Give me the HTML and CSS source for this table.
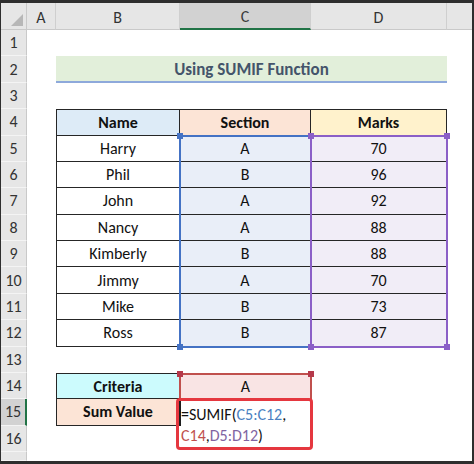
FILE: index.html
```html
<!DOCTYPE html>
<html>
<head>
<meta charset="utf-8">
<link rel="stylesheet" href="styles.css">
</head>
<body>
<div class="sheet">
  <div class="corner"><span class="tri"></span></div>
  <div class="colh">A</div>
  <div class="colh">B</div>
  <div class="colh sel">C</div>
  <div class="colh">D</div>
  <div class="colh last"></div>

  <div class="rowh r1">1</div>
  <div class="rowh r2">2</div>
  <div class="rowh r3">3</div>
  <div class="rowh r4">4</div>
  <div class="rowh r5">5</div>
  <div class="rowh r6">6</div>
  <div class="rowh r7">7</div>
  <div class="rowh r8">8</div>
  <div class="rowh r9">9</div>
  <div class="rowh r10">10</div>
  <div class="rowh r11">11</div>
  <div class="rowh r12">12</div>
  <div class="rowh r13">13</div>
  <div class="rowh r14">14</div>
  <div class="rowh r15 sel">15</div>
  <div class="rowh r16">16</div>
  <div class="rowh r17"></div>

  <div class="title">Using SUMIF Function</div>

  <div class="cell th cb first top r4">Name</div>
  <div class="cell th cc top r4 sec-h">Section</div>
  <div class="cell th cd top r4 marks-h">Marks</div>

  <div class="cell cb first r5">Harry</div><div class="cell cc secv r5">A</div><div class="cell cd markv r5">70</div>
  <div class="cell cb first r6">Phil</div><div class="cell cc secv r6">B</div><div class="cell cd markv r6">96</div>
  <div class="cell cb first r7">John</div><div class="cell cc secv r7">A</div><div class="cell cd markv r7">92</div>
  <div class="cell cb first r8">Nancy</div><div class="cell cc secv r8">A</div><div class="cell cd markv r8">88</div>
  <div class="cell cb first r9">Kimberly</div><div class="cell cc secv r9">B</div><div class="cell cd markv r9">88</div>
  <div class="cell cb first r10">Jimmy</div><div class="cell cc secv r10">A</div><div class="cell cd markv r10">70</div>
  <div class="cell cb first r11">Mike</div><div class="cell cc secv r11">B</div><div class="cell cd markv r11">73</div>
  <div class="cell cb first r12">Ross</div><div class="cell cc secv r12">B</div><div class="cell cd markv r12">87</div>

  <div class="range range-c"><i class="h tl"></i><i class="h bl"></i></div>
  <div class="range range-d"><i class="h tl"></i><i class="h tr"></i><i class="h bl"></i><i class="h br"></i></div>

  <div class="cell th cb first top r14 crit">Criteria</div>
  <div class="cell cc r14 crit-v">A</div>
  <div class="cell th cb first r15 sumv">Sum Value</div>
  <div class="range range-crit"><i class="h tl"></i><i class="h tr"></i></div>

  <div class="formula"><span class="fk">=SUMIF(</span><span class="fb">C5:C12</span><span class="fk">,</span> <span class="fr">C14</span><span class="fk">,</span><span class="fp">D5:D12</span><span class="fk">)</span></div>
</div>
</body>
</html>
```
FILE: styles.css
```css
* { box-sizing: border-box; }
html, body { margin: 0; padding: 0; }
body {
  background: #2e2e2e;
  width: 474px;
  height: 464px;
  overflow: hidden;
  font-family: Carlito, Lato, "Liberation Sans", sans-serif;
  color: #111;
}
.sheet {
  margin: 3px 2px 3px 1px;
  width: 471px;
  height: 458px;
  background: #fff;
  display: grid;
  grid-template-columns: 26px 29px 124px 131px 136px 1fr;
  grid-template-rows: 27px repeat(16, 26.375px) 1fr;
  font-size: 16px;
}
.corner {
  grid-row: 1; grid-column: 1;
  background: #e6e6e6;
  border-right: 1px solid #c9c9c9;
  border-bottom: 1px solid #c9c9c9;
  position: relative;
}
.tri {
  position: absolute;
  right: 3px; bottom: 3px;
  width: 0; height: 0;
  border-left: 12px solid transparent;
  border-bottom: 12px solid #b7b7b7;
}
.colh {
  grid-row: 1;
  background: #e6e6e6;
  border-right: 1px solid #cfcfcf;
  border-bottom: 1px solid #c9c9c9;
  display: flex; align-items: center; justify-content: center;
  color: #333;
  font-size: 16px;
  padding-top: 2px;
}
.colh.sel {
  background: #d2d2d2;
  border-bottom: 2px solid #217346;
  color: #3a3a3a;
}
.colh.last { border-right: none; }
.rowh {
  grid-column: 1;
  background: #e6e6e6;
  border-right: 1px solid #c9c9c9;
  border-bottom: 1px solid #f4f4f4;
  display: flex; align-items: center; justify-content: center;
  color: #333;
  font-size: 16px;
}
.rowh.sel {
  background: #d2d2d2;
  border-right: 2px solid #217346;
}
.r1 { grid-row: 2; } .r2 { grid-row: 3; } .r3 { grid-row: 4; } .r4 { grid-row: 5; }
.r5 { grid-row: 6; } .r6 { grid-row: 7; } .r7 { grid-row: 8; } .r8 { grid-row: 9; }
.r9 { grid-row: 10; } .r10 { grid-row: 11; } .r11 { grid-row: 12; } .r12 { grid-row: 13; }
.r13 { grid-row: 14; } .r14 { grid-row: 15; } .r15 { grid-row: 16; } .r16 { grid-row: 17; }
.r17 { grid-row: 18; }

.title {
  grid-row: 3; grid-column: 3 / 6;
  background: #e2efda;
  border-bottom: 2px solid #8ea9db;
  display: flex; align-items: center; justify-content: center;
  font-weight: bold;
  color: #44546a;
  font-size: 17px;
  padding-top: 1px;
}

.cell {
  display: flex; align-items: center; justify-content: center;
  border-right: 1px solid #262626;
  border-bottom: 1px solid #262626;
  font-size: 16px;
  background: #fff;
}
.cell.first { border-left: 1px solid #262626; }
.cell.top { border-top: 1px solid #262626; }
.th { font-weight: bold; }
.cb { grid-column: 3; }
.cc { grid-column: 4; }
.cd { grid-column: 5; }
.cb.r4 { background: #ddebf7; }
.sec-h { background: #fce4d6; }
.marks-h { background: #fff2cc; }
.secv { background: #e9eef8; }
.markv { background: #f1edf7; }

.range {
  position: relative;
  z-index: 2;
  pointer-events: none;
}
.range-c {
  grid-row: 6 / 14; grid-column: 4;
  border: 2px solid #4472c4;
  margin: -1px -1px -1px -1px;
}
.range-d {
  grid-row: 6 / 14; grid-column: 5;
  border: 2px solid #8b5fc7;
  margin: -1px -1px -1px -1px;
}
.range-crit {
  grid-row: 15; grid-column: 4;
  border: 2px solid #c0504d;
  border-bottom: none;
  margin: 0 -1px 0 -1px;
}
.h {
  position: absolute;
  width: 6px; height: 6px;
}
.range-c .h { background: #4472c4; }
.range-d .h { background: #8b5fc7; }
.range-crit .h { background: #b5394a; }
.h.tl { left: -4px; top: -4px; }
.h.tr { right: -4px; top: -4px; }
.h.bl { left: -4px; bottom: -4px; }
.h.br { right: -4px; bottom: -4px; }

.crit { background: #ccfbfd; }
.sumv { background: #fce4d6; }
.crit-v { background: #f9e4e4; border-right: none; border-bottom: none; }

.formula {
  grid-row: 16 / 18; grid-column: 4;
  margin: -1px -2px 2px -4px;
  border: 3px solid #e5373f;
  border-radius: 4px;
  background: #fff;
  position: relative;
  z-index: 3;
  padding: 3px 1px 0 2px;
  font-size: 16px;
  line-height: 21px;
  letter-spacing: 0;
}
.formula::before {
  content: "";
  position: absolute;
  left: 0; top: 0;
  width: 2px; height: 25px;
  background: #1d1d1d;
}
.fk { color: #111; }
.fb { color: #4a7fc1; }
.fr { color: #c0504d; }
.fp { color: #8064a2; }
```
